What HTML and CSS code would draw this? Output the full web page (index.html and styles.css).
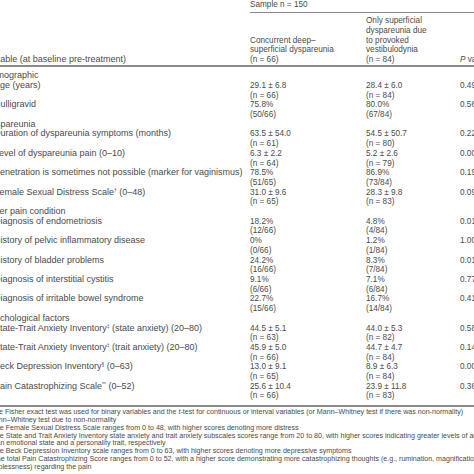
FILE: index.html
```html
<!DOCTYPE html>
<html>
<head>
<meta charset="utf-8">
<link rel="stylesheet" href="styles.css">
</head>
<body>
<div class="page">
  <table class="tbl">
    <colgroup><col class="c1"><col class="c2"><col class="c3"><col class="c4"></colgroup>
    <thead>
      <tr class="sample-row"><th class="blank"></th><th colspan="3" class="sample">Sample n = 150</th></tr>
      <tr class="heads">
        <th class="lab">Variable (at baseline pre-treatment)</th>
        <th>Concurrent deep–<br>superficial dyspareunia<br>(n = 66)</th>
        <th>Only superficial<br>dyspareunia due<br>to provoked<br>vestibulodynia<br>(n = 84)</th>
        <th><i>P</i> value*</th>
      </tr>
    </thead>
    <tbody>
      <tr class="grp first"><td class="lab">Demographic</td><td></td><td></td><td></td></tr>
      <tr><td class="item">Age (years)</td><td>29.1 ± 6.8<br>(n = 66)</td><td>28.4 ± 6.0<br>(n = 84)</td><td>0.49</td></tr>
      <tr><td class="item">Nulligravid</td><td>75.8%<br>(50/66)</td><td>80.0%<br>(67/84)</td><td>0.56</td></tr>
      <tr class="grp"><td class="lab">Dyspareunia</td><td></td><td></td><td></td></tr>
      <tr><td class="item">Duration of dyspareunia symptoms (months)</td><td>63.5 ± 54.0<br>(n = 61)</td><td>54.5 ± 50.7<br>(n = 80)</td><td>0.227</td></tr>
      <tr><td class="item">Level of dyspareunia pain (0–10)</td><td>6.3 ± 2.2<br>(n = 64)</td><td>5.2 ± 2.6<br>(n = 79)</td><td>0.007</td></tr>
      <tr><td class="item">Penetration is sometimes not possible (marker for vaginismus)</td><td>78.5%<br>(51/65)</td><td>86.9%<br>(73/84)</td><td>0.19</td></tr>
      <tr><td class="item">Female Sexual Distress Scale<sup>†</sup> (0–48)</td><td>31.0 ± 9.6<br>(n = 65)</td><td>28.3 ± 9.8<br>(n = 83)</td><td>0.09</td></tr>
      <tr class="grp"><td class="lab">Other pain condition</td><td></td><td></td><td></td></tr>
      <tr><td class="item">Diagnosis of endometriosis</td><td>18.2%<br>(12/66)</td><td>4.8%<br>(4/84)</td><td>0.014</td></tr>
      <tr><td class="item">History of pelvic inflammatory disease</td><td>0%<br>(0/66)</td><td>1.2%<br>(1/84)</td><td>1.00</td></tr>
      <tr><td class="item">History of bladder problems</td><td>24.2%<br>(16/66)</td><td>8.3%<br>(7/84)</td><td>0.011</td></tr>
      <tr><td class="item">Diagnosis of interstitial cystitis</td><td>9.1%<br>(6/66)</td><td>7.1%<br>(6/84)</td><td>0.77</td></tr>
      <tr><td class="item">Diagnosis of irritable bowel syndrome</td><td>22.7%<br>(15/66)</td><td>16.7%<br>(14/84)</td><td>0.41</td></tr>
      <tr class="grp"><td class="lab">Psychological factors</td><td></td><td></td><td></td></tr>
      <tr><td class="item">State-Trait Anxiety Inventory<sup>‡</sup> (state anxiety) (20–80)</td><td>44.5 ± 5.1<br>(n = 63)</td><td>44.0 ± 5.3<br>(n = 82)</td><td>0.58</td></tr>
      <tr><td class="item">State-Trait Anxiety Inventory<sup>‡</sup> (trait anxiety) (20–80)</td><td>45.9 ± 5.0<br>(n = 66)</td><td>44.7 ± 4.7<br>(n = 84)</td><td>0.14</td></tr>
      <tr><td class="item">Beck Depression Inventory<sup>§</sup> (0–63)</td><td>13.0 ± 9.1<br>(n = 65)</td><td>8.9 ± 6.3<br>(n = 84)</td><td>0.003</td></tr>
      <tr class="last"><td class="item">Pain Catastrophizing Scale<sup>**</sup> (0–52)</td><td>25.6 ± 10.4<br>(n = 66)</td><td>23.9 ± 11.8<br>(n = 83)</td><td>0.36</td></tr>
    </tbody>
  </table>
  <div class="notes">
    <p><sup>*</sup>The Fisher exact test was used for binary variables and the <i>t</i>-test for continuous or interval variables (or Mann–Whitney test if there was non-normality)</p>
    <p>Mann–Whitney test due to non-normality</p>
    <p><sup>†</sup>The Female Sexual Distress Scale ranges from 0 to 48, with higher scores denoting more distress</p>
    <p><sup>‡</sup>The State and Trait Anxiety Inventory state anxiety and trait anxiety subscales scores range from 20 to 80, with higher scores indicating greater levels of anxiety</p>
    <p>in an emotional state and a personality trait, respectively</p>
    <p><sup>§</sup>The Beck Depression Inventory scale ranges from 0 to 63, with higher scores denoting more depressive symptoms</p>
    <p><sup>**</sup>The total Pain Catastrophizing Score ranges from 0 to 52, with a higher score demonstrating more catastrophizing thoughts (e.g., rumination, magnification, and</p>
    <p>helplessness) regarding the pain</p>
  </div>
</div>
</body>
</html>
```

FILE: styles.css
```css
html, body {
  margin: 0;
  padding: 0;
  background: #ffffff;
  overflow: hidden;
}
body {
  width: 474px;
  height: 474px;
  font-family: "Liberation Sans", Arial, sans-serif;
  color: #4a4a4a;
}
.page {
  margin-left: -15px;
  width: 540px;
}
.tbl {
  border-collapse: collapse;
  table-layout: fixed;
  width: 540px;
  font-size: 8.2px;
  line-height: 9.7px;
}
.c1 { width: 265px; }
.c2 { width: 116px; }
.c3 { width: 94px; }
.c4 { width: 65px; }
.tbl th, .tbl td {
  padding: 0;
  text-align: left;
  font-weight: normal;
  vertical-align: top;
  white-space: nowrap;
}
.sample-row th {
  padding-bottom: 2px;
}
.sample {
  border-bottom: 1px solid #8a8a8a;
}
.heads th {
  vertical-align: bottom;
  padding-top: 3.5px;
  border-bottom: 2px solid #8a8a8a;
}
.heads th.lab {
  font-size: 9px;
}
td.lab, td.item {
  font-size: 9px;
}
td.item {
  padding-left: 9px;
}
.first td {
  padding-top: 4.5px;
}
.last td {
  padding-bottom: 4px;
  border-bottom: 2px solid #8a8a8a;
}
sup {
  font-size: 5px;
  line-height: 0;
  vertical-align: 3px;
}
.notes {
  margin-left: 4px;
  margin-top: 2px;
  font-size: 7.1px;
  line-height: 7.8px;
}
.notes p {
  margin: 0;
  white-space: nowrap;
}
.notes p sup {
  font-size: 4.5px;
}
```
